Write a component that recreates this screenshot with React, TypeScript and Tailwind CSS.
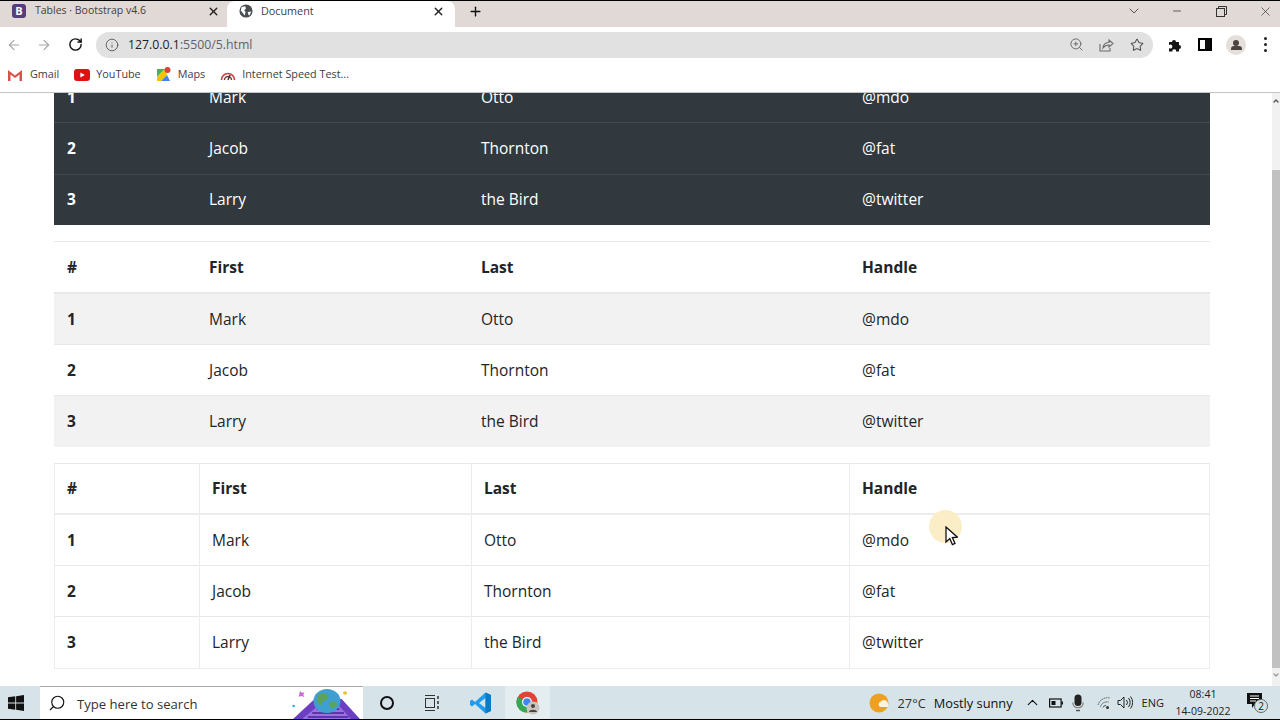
import { ArrowLeft, ArrowRight, ChevronDown, ChevronUp, Info, Minus, Plus, RotateCw, Search, Star, X, ZoomIn } from 'lucide-react';

const rows = [
  ['1', 'Mark', 'Otto', '@mdo'],
  ['2', 'Jacob', 'Thornton', '@fat'],
  ['3', 'Larry', 'the Bird', '@twitter'],
];

function GlobeIcon() {
  return (
    <svg width="14" height="14" viewBox="0 0 16 16">
      <circle cx="8" cy="8" r="7.5" fill="#4a4f54" />
      <path d="M3 3.5 L7 2.5 L8 5 L6 7 L7.5 9 L6.5 13 L4.5 10.5 L2 7.5 Z M10 9 L14 8.5 L12 13 L10.5 12 Z" fill="#fff" />
    </svg>
  );
}

function Gmail() {
  return (
    <svg width="16" height="12" viewBox="0 0 16 12">
      <path d="M1 12V1l7 5.5L15 1v11h-2.5V5.5L8 9 3.5 5.5V12z" fill="#d9534a" />
    </svg>
  );
}

function YouTube() {
  return (
    <svg width="16" height="12" viewBox="0 0 16 12">
      <rect width="16" height="12" rx="3" fill="#e01010" />
      <path d="M6.4 3.4 10.8 6 6.4 8.6z" fill="#fff" />
    </svg>
  );
}

function Maps() {
  return (
    <svg width="14" height="15" viewBox="0 0 14 15">
      <path d="M0 2h8L0 10z" fill="#4caf50" />
      <path d="M0 10 8 2l2 6-6 6H0z" fill="#f4c20d" />
      <path d="M4 14l6-6 3 6z" fill="#4285f4" />
      <circle cx="10.5" cy="3" r="3" fill="#d9433a" />
    </svg>
  );
}

function SpeedTest() {
  return (
    <svg width="16" height="12" viewBox="0 0 16 12" fill="none">
      <path d="M1.5 11a6.5 6.5 0 0 1 13 0" stroke="#c9403f" strokeWidth="1.6" />
      <path d="M4.5 11a3.5 3.5 0 0 1 7 0" stroke="#7d3b3f" strokeWidth="1.4" />
      <path d="M8 11 10 6" stroke="#333" strokeWidth="1.4" />
    </svg>
  );
}

function ShareIcon() {
  return (
    <svg width="15" height="15" viewBox="0 0 15 15" fill="none" stroke="#6b6b6b" strokeWidth="1.1">
      <path d="M1 7v7h10v-3" />
      <path d="M4 11c.5-4 3-5.5 6-5.5V3l4 3.5-4 3.5V8c-2.5 0-4.5 1-6 3z" />
    </svg>
  );
}

function Puzzle() {
  return (
    <svg width="15" height="15" viewBox="0 0 15 15">
      <path d="M1 5h3a2 2 0 1 1 4 0h3v3a2 2 0 1 1 0 4v2.500H8a1.800 1.800 0 1 0-3.500 0H1v-3.500a2 2 0 1 0 0-3z" fill="#151515" />
    </svg>
  );
}

function WindowsLogo() {
  return (
    <svg width="16" height="16" viewBox="0 0 15 15" fill="#111">
      <path d="M0 2.200 6.800 1.200V7H0zM7.600 1.100 15 0v7H7.600zM0 7.900h6.800v5.900L0 12.800zM7.600 7.900H15V15l-7.400-1.100z" />
    </svg>
  );
}

function SearchArt() {
  return (
    <svg width="70" height="33" viewBox="0 0 62 33" preserveAspectRatio="none">
      <path d="M0 33 20 12h24l17 21z" fill="#6b3fc4" />
      <path d="M8 33 24 18h17l12 15z" fill="#9a6fe0" />
      <path d="M14 30h36M18 26h28M22 22h20" stroke="#4b23a0" strokeWidth="1.500" />
      <circle cx="31" cy="14" r="12" fill="#3f9fd0" />
      <path d="M23 8c4-3 8-2 9 1s-2 4-4 5-1 5-3 4-4-7-2-10zM34 15c3-1 6 0 6 2s-3 5-5 4-3-5-1-6z" fill="#5ba35a" />
      <path d="M7 4l2 2 2-1-1 3 1 2-3-1-2 1 .5-3z" fill="#c86ad0" />
      <circle cx="47" cy="6" r="1.800" fill="#e8c23a" />
      <circle cx="1.500" cy="19" r="1.300" fill="#49b5d8" />
    </svg>
  );
}

function VSCode() {
  return (
    <svg width="22" height="22" viewBox="0 0 22 22">
      <path d="M15.500 0.500 21 3v16l-5.500 2.500L5 12l-3 2.500L0 13V9l2-1.500L5 10z" fill="#1f9cf0" />
      <path d="M15.500 6 9 11l6.500 5z" fill="#d6e4e9" />
      <path d="M15.500.5 21 3v16l-5.500 2.500z" fill="#0f7ac4" />
    </svg>
  );
}

function ChromeLogo() {
  return (
    <svg width="24" height="24" viewBox="0 0 24 24">
      <circle cx="11" cy="11" r="10.500" fill="#e44234" />
      <path d="M11 11 1.900 5.700A10.500 10.500 0 0 0 11 21.500z" fill="#34a853" />
      <path d="M11 11h10.500A10.500 10.500 0 0 1 11 21.500z" fill="#fbbc05" />
      <circle cx="11" cy="11" r="5" fill="#fff" />
      <circle cx="11" cy="11" r="3.800" fill="#4285f4" />
      <circle cx="17" cy="17" r="6.500" fill="#c9c4bf" />
      <circle cx="17" cy="15" r="2" fill="#4b4340" />
      <path d="M13 21c.5-3 7.500-3 8 0z" fill="#4b4340" />
    </svg>
  );
}

function WeatherIcon() {
  return (
    <svg width="20" height="20" viewBox="0 0 20 20">
      <circle cx="10" cy="10" r="9.500" fill="#f0a020" />
      <path d="M19 10.500a4 4 0 0 0-7-2 3 3 0 0 0-1 5.500h8z" fill="#fdf3dd" />
    </svg>
  );
}

function BatteryIcon() {
  return (
    <svg width="14" height="10" viewBox="0 0 14 10" fill="none">
      <rect x=".6" y="1" width="11.500" height="8" stroke="#111" strokeWidth="1.200" />
      <rect x="2.500" y="3" width="4" height="4" fill="#111" />
      <rect x="12.500" y="3.500" width="1.500" height="3" fill="#111" />
    </svg>
  );
}

function MicIcon() {
  return (
    <svg width="12" height="18" viewBox="0 0 12 18">
      <rect x="2.500" y="0.500" width="7" height="11.500" rx="3.500" fill="#222" />
      <path d="M.8 8.500c0 7 10.400 7 10.400 0" fill="none" stroke="#777" strokeWidth="1.200" />
      <path d="M4 16.500h4" stroke="#555" strokeWidth="1.500" />
    </svg>
  );
}

function WifiIcon() {
  return (
    <svg width="14" height="14" viewBox="0 0 14 14" fill="none" stroke="#555" strokeWidth="1">
      <path d="M1 9a10 10 0 0 1 12-7" strokeDasharray="1.500 .7" />
      <path d="M3.500 10.500a7 7 0 0 1 8-4.500" strokeDasharray="1.500 .7" />
      <path d="M6 11.500a3 3 0 0 1 3-2" />
      <circle cx="10.500" cy="11.500" r="1.500" fill="#333" stroke="none" />
    </svg>
  );
}

function SpeakerIcon() {
  return (
    <svg width="16" height="15" viewBox="0 0 16 15" fill="none" stroke="#222" strokeWidth="1">
      <path d="M1 5.500h2.500L7 2v11L3.500 9.500H1z" />
      <path d="M9.500 5a4 4 0 0 1 0 5M11.500 3a7 7 0 0 1 0 9M13.500 1.500a9.500 9.500 0 0 1 0 12" />
    </svg>
  );
}

function NotificationIcon() {
  return (
    <div className="relative w-[20px] h-[20px]">
      <svg width="16" height="16" viewBox="0 0 16 16">
        <path d="M0 0h15v11H8l-3 4v-4H0z" fill="#111" />
        <path d="M3 3h9M3 5.500h9M3 8h6" stroke="#fff" strokeWidth="1" />
      </svg>
      <span className="absolute left-[7px] top-[6px] w-[14px] h-[14px] rounded-full border border-[#666] bg-[#d6e4e9] text-[10px] leading-[12px] text-center text-[#111]">2</span>
    </div>
  );
}

function BootstrapTable({ variant }: { variant: 'dark' | 'striped' | 'bordered' }) {
  const dark = variant === 'dark';
  const bordered = variant === 'bordered';
  const cell = bordered
    ? 'border-l border-[#ececec] first:border-l-0 px-[12px] pt-[1px] align-middle'
    : dark
      ? 'px-[13px] align-middle'
      : 'px-[13px] pt-[1px] align-middle';
  const lineColor = dark ? 'border-[#414a50]' : 'border-[#e8e8e8]';
  return (
    <table className={`w-full table-fixed border-collapse ${dark ? 'bg-[#31393e] text-white' : 'text-[#212529]'} ${bordered ? 'border border-[#ececec]' : ''}`}>
      <colgroup>
        <col className={bordered ? 'w-[145px]' : 'w-[142px]'} />
        <col className="w-[272px]" />
        <col className={bordered ? 'w-[378px]' : 'w-[381px]'} />
        <col />
      </colgroup>
      <thead>
        <tr className={`h-[51px] border-t ${lineColor}`}>
          {['#', 'First', 'Last', 'Handle'].map((h) => (
            <th key={h} className={`${cell} text-left font-bold border-b-2 ${lineColor}`}>{h}</th>
          ))}
        </tr>
      </thead>
      <tbody>
        {rows.map((r, i) => (
          <tr key={r[0]} className={`h-[51.300px] border-t ${i === 0 ? 'border-t-0' : lineColor} ${variant === 'striped' && i % 2 === 0 ? 'bg-[#f2f2f2]' : ''}`}>
            {r.map((c, j) => (
              <td key={j} className={`${cell} ${j === 0 ? 'font-bold' : ''}`}>{c}</td>
            ))}
          </tr>
        ))}
      </tbody>
    </table>
  );
}

export default function App() {
  return (
    <div className="relative w-[1280px] h-[720px] overflow-hidden bg-white flex flex-col font-['Open_Sans','Noto_Sans',sans-serif] text-[#202124]">
      {/* tab strip */}
      <div className="h-[27px] shrink-0 border-t border-black bg-[#e0d9d5] flex items-stretch">
        <div className="w-[227px] pl-[12px] pr-[7px] pb-[6px] flex items-center gap-[9px] rounded-br-lg text-[10.500px] text-[#45403d]">
          <span className="w-[14px] h-[14px] rounded-[3px] bg-[#563d7c] text-white text-[11px] font-bold leading-[14px] text-center">B</span>
          <span className="flex-1 truncate">Tables · Bootstrap v4.6</span>
          <X size={13} strokeWidth={2.500} className="text-[#222]" />
        </div>
        <div className="w-[228px] pl-[12px] pr-[10px] pb-[6px] bg-white rounded-t-lg flex items-center gap-[8px] text-[10.800px] text-[#3c4043]">
          <GlobeIcon />
          <span className="flex-1">Document</span>
          <X size={13} strokeWidth={2.500} className="text-[#222]" />
        </div>
        <div className="w-[40px] pb-[6px] flex items-center justify-center">
          <Plus size={15} strokeWidth={2.200} className="text-[#111]" />
        </div>
        <div className="flex-1 pb-[6px] flex items-center justify-end text-[#333]">
          <ChevronDown size={16} strokeWidth={1.200} className="mr-[29px]" />
          <Minus size={12} strokeWidth={1.500} className="mr-[33px]" />
          <svg width="11" height="11" viewBox="0 0 11 11" fill="none" stroke="#333" className="mr-[31px]">
            <rect x=".5" y="2.500" width="8" height="8" />
            <path d="M2.500 2.500v-2h8v8h-2" />
          </svg>
          <X size={15} strokeWidth={1.100} className="mr-[7px]" />
        </div>
      </div>

      {/* toolbar */}
      <div className="h-[35px] shrink-0 flex items-center bg-white pl-[6px]">
        <ArrowLeft size={16} strokeWidth={1.600} className="text-[#a3a3a3]" />
        <ArrowRight size={16} strokeWidth={1.600} className="ml-[14px] text-[#a3a3a3]" />
        <RotateCw size={15} strokeWidth={2.300} className="ml-[16px] text-[#111]" />
        <div className="ml-[13px] w-[1057px] h-[26px] rounded-full bg-[#e1e1e1] flex items-center pl-[9px] pr-[9px]">
          <Info size={14} strokeWidth={1.500} className="text-[#555]" />
          <span className="ml-[9px] flex-1 pt-[1px] text-[12.300px] text-[#5f6368]">
            <span className="text-[#222]">127.0.0.1</span>:5500/5.html
          </span>
          <ZoomIn size={15} strokeWidth={1.500} className="text-[#666]" />
          <span className="ml-[15px]"><ShareIcon /></span>
          <Star size={14} strokeWidth={1.800} className="ml-[16px] text-[#555]" />
        </div>
        <span className="ml-[15px]"><Puzzle /></span>
        <div className="ml-[15px] w-[14px] h-[13px] border-2 border-black bg-[linear-gradient(90deg,#fff_50%,#111_50%)]" />
        <div className="ml-[14px] w-[20px] h-[20px] rounded-full bg-[#e5dfdb] flex flex-col items-center justify-center">
          <span className="w-[6px] h-[6px] rounded-full bg-[#4b4340]" />
          <span className="w-[11px] h-[4px] rounded-t-[3px] bg-[#4b4340]" />
        </div>
        <div className="ml-[18px] flex flex-col gap-[3px]">
          <span className="w-[3px] h-[3px] rounded-full bg-[#222]" />
          <span className="w-[3px] h-[3px] rounded-full bg-[#222]" />
          <span className="w-[3px] h-[3px] rounded-full bg-[#222]" />
        </div>
      </div>

      {/* bookmarks */}
      <div className="h-[31px] shrink-0 flex items-center pl-[7px] pb-[5px] text-[10.800px] text-[#3c4043] border-b border-[#c4c4c4] bg-white">
        <Gmail />
        <span className="ml-[7px]">Gmail</span>
        <span className="ml-[15px]"><YouTube /></span>
        <span className="ml-[6px]">YouTube</span>
        <span className="ml-[16px]"><Maps /></span>
        <span className="ml-[7px]">Maps</span>
        <span className="ml-[15px]"><SpeedTest /></span>
        <span className="ml-[6px]">Internet Speed Test...</span>
      </div>

      {/* page */}
      <div className="flex-1 min-h-0 flex overflow-hidden">
        <div className="flex-1 overflow-hidden pl-[54px] pr-[62px] text-[15.500px]">
          <div className="-mt-[73px] flex flex-col gap-[16px]">
            <BootstrapTable variant="dark" />
            <BootstrapTable variant="striped" />
            <BootstrapTable variant="bordered" />
          </div>
        </div>
        <div className="w-[8px] shrink-0 bg-[#f1f1f1] flex flex-col items-center">
          <ChevronUp size={8} strokeWidth={4} className="mt-[4px] text-[#555]" />
          <div className="mt-[65px] w-full h-[498px] bg-[#c1c1c1]" />
          <ChevronDown size={8} strokeWidth={4} className="mt-[3px] text-[#999]" />
        </div>
      </div>

      {/* taskbar */}
      <div className="h-[34px] shrink-0 bg-[#d6e4e9] border-b border-black flex items-center text-[#111]">
        <div className="w-[40px] pl-[8px]"><WindowsLogo /></div>
        <div className="w-[323px] h-full bg-white border-t border-[#aaa] flex items-center pl-[8px] pr-[1px] overflow-hidden">
          <Search size={18} strokeWidth={1.500} className="-scale-x-100" />
          <span className="ml-[11px] flex-1 pt-[3px] text-[13.100px] text-[#333]">Type here to search</span>
          <SearchArt />
        </div>
        <div className="ml-[17px] w-[14px] h-[14px] rounded-full border-[2.500px] border-[#111]" />
        <svg width="16" height="16" viewBox="0 0 16 16" fill="none" stroke="#333" className="ml-[30px]">
          <path d="M1 .5h10M1 15.500h10" />
          <rect x="1.500" y="3.500" width="9" height="9" />
          <path d="M14 1v3M14 6v3M14 11v3" strokeWidth="1.500" />
        </svg>
        <span className="ml-[30px]"><VSCode /></span>
        <div className="ml-[13px] w-[45px] h-full bg-[#e4eef1] flex items-center justify-center">
          <ChromeLogo />
        </div>
        <div className="flex-1" />
        <WeatherIcon />
        <span className="ml-[9px] pt-[3px] text-[12.800px] text-[#333]">27°C</span>
        <span className="ml-[8px] pt-[3px] text-[12.800px]">Mostly sunny</span>
        <ChevronUp size={17} strokeWidth={1.500} className="ml-[11px]" />
        <span className="ml-[8px]"><BatteryIcon /></span>
        <span className="ml-[9px]"><MicIcon /></span>
        <span className="ml-[13px]"><WifiIcon /></span>
        <span className="ml-[6px]"><SpeakerIcon /></span>
        <span className="ml-[9px] pt-[1px] text-[11px] text-[#222]">ENG</span>
        <div className="ml-[12px] w-[54px] flex flex-col items-center text-[10.500px] leading-[17px] whitespace-nowrap text-[#222]">
          <span>08:41</span>
          <span>14-09-2022</span>
        </div>
        <span className="ml-[17px] mr-[13px]"><NotificationIcon /></span>
      </div>

      {/* cursor highlight */}
      <div className="absolute left-[929px] top-[510px] w-[33px] h-[33px] rounded-full bg-[#fbeec6]" />
      <svg className="absolute left-[945px] top-[526px]" width="13" height="20" viewBox="0 0 13 20">
        <path d="M1 1v15l3.800-3.400 2.600 6 2.600-1.200-2.600-5.800 5-.4z" fill="#fff" stroke="#111" strokeWidth="1.300" />
      </svg>
    </div>
  );
}
